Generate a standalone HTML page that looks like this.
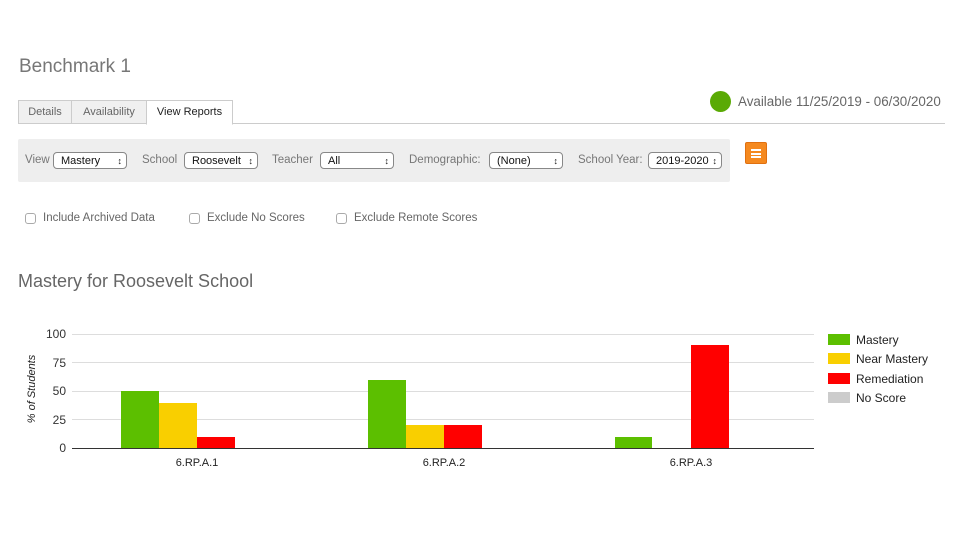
<!DOCTYPE html>
<html><head><meta charset="utf-8"><style>
*{margin:0;padding:0;box-sizing:border-box}
body{width:960px;height:540px;background:#fff;font-family:"Liberation Sans",sans-serif;position:relative;overflow:hidden;color:#555}
.a{position:absolute}
.tab{position:absolute;top:100px;height:24px;border:1px solid #ccc;background:#f0f0f0;font-size:11px;color:#666;line-height:22px;text-align:center}
.sel{position:absolute;top:152px;height:17px;border:1px solid #888;border-radius:4px;background:#fff;font-size:11px;color:#111;line-height:16px;padding-left:7px}
.sel:after{content:"\2195";position:absolute;right:4px;top:0;font-size:9px}
.lbl{position:absolute;top:154px;font-size:11.5px;color:#777}
.cb{position:absolute;top:213px;width:11px;height:11px;border:1px solid #aaa;border-radius:3px}
.cbl{position:absolute;top:212px;font-size:11.5px;color:#666}
.g{position:absolute;left:72px;width:742px;height:1px;background:#ddd}
.yl{position:absolute;width:30px;left:36px;text-align:right;font-size:12px;color:#333}
.bar{position:absolute}
.lg{position:absolute;left:828px;width:22px;height:11px}
.lt{position:absolute;left:856px;font-size:12px;color:#222}
</style></head><body>
<div class="a" style="left:19px;top:56px;font-size:19px;color:#777">Benchmark 1</div>
<div class="a" style="left:18px;top:123px;width:927px;height:1px;background:#ccc"></div>
<div class="tab" style="left:18px;width:54px">Details</div>
<div class="tab" style="left:71px;width:76px">Availability</div>
<div class="tab" style="left:146px;width:87px;background:#fff;border-bottom-color:#fff;color:#222;height:25px">View Reports</div>
<div class="a" style="left:710px;top:91px;width:21px;height:21px;border-radius:50%;background:#5aaa05"></div>
<div class="a" style="left:738px;top:94px;font-size:13.4px;color:#666">Available 11/25/2019 - 06/30/2020</div>
<div class="a" style="left:18px;top:139px;width:712px;height:43px;background:#eee;border-radius:2px"></div>
<div class="lbl" style="left:25px">View</div>
<div class="sel" style="left:53px;width:74px">Mastery</div>
<div class="lbl" style="left:142px">School</div>
<div class="sel" style="left:184px;width:74px">Roosevelt</div>
<div class="lbl" style="left:272px">Teacher</div>
<div class="sel" style="left:320px;width:74px">All</div>
<div class="lbl" style="left:409px">Demographic:</div>
<div class="sel" style="left:489px;width:74px">(None)</div>
<div class="lbl" style="left:578px">School Year:</div>
<div class="sel" style="left:648px;width:74px">2019-2020</div>
<div class="a" style="left:745px;top:142px;width:22px;height:22px;background:#f5891f;border:1px solid #e07010;border-radius:2px"><div style="margin:6px 5px;height:9px;border-top:2px solid #fff;border-bottom:2px solid #fff;position:relative"><div style="position:absolute;top:1.5px;left:0;right:0;height:2px;background:#fff"></div></div></div>
<div class="cb" style="left:25px"></div><div class="cbl" style="left:43px">Include Archived Data</div>
<div class="cb" style="left:189px"></div><div class="cbl" style="left:207px">Exclude No Scores</div>
<div class="cb" style="left:336px"></div><div class="cbl" style="left:354px">Exclude Remote Scores</div>
<div class="a" style="left:18px;top:271px;font-size:18px;color:#666">Mastery for Roosevelt School</div>
<div class="g" style="top:334px"></div><div class="g" style="top:362px"></div><div class="g" style="top:391px"></div><div class="g" style="top:419px"></div>
<div class="g" style="top:448px;background:#333"></div>
<div class="yl" style="top:327px">100</div><div class="yl" style="top:356px">75</div><div class="yl" style="top:384px">50</div><div class="yl" style="top:413px">25</div><div class="yl" style="top:441px">0</div>
<div class="a" style="left:-10px;top:383px;width:84px;text-align:center;font-size:11px;font-style:italic;color:#222;transform:rotate(-90deg)">% of Students</div>
<div class="bar" style="left:121px;top:391px;width:38px;height:57px;background:#5cbf00"></div>
<div class="bar" style="left:159px;top:403px;width:38px;height:45px;background:#f9cf00"></div>
<div class="bar" style="left:197px;top:437px;width:38px;height:11px;background:#f00"></div>
<div class="bar" style="left:368px;top:380px;width:38px;height:68px;background:#5cbf00"></div>
<div class="bar" style="left:406px;top:425px;width:38px;height:23px;background:#f9cf00"></div>
<div class="bar" style="left:444px;top:425px;width:38px;height:23px;background:#f00"></div>
<div class="bar" style="left:615px;top:437px;width:37px;height:11px;background:#5cbf00"></div>
<div class="bar" style="left:691px;top:345px;width:38px;height:103px;background:#f00"></div>
<div class="a" style="left:157px;top:457px;width:80px;text-align:center;font-size:11px;color:#222">6.RP.A.1</div>
<div class="a" style="left:404px;top:457px;width:80px;text-align:center;font-size:11px;color:#222">6.RP.A.2</div>
<div class="a" style="left:651px;top:457px;width:80px;text-align:center;font-size:11px;color:#222">6.RP.A.3</div>
<div class="lg" style="top:334px;background:#5cbf00"></div><div class="lt" style="top:333px">Mastery</div>
<div class="lg" style="top:353px;background:#f9cf00"></div><div class="lt" style="top:352px">Near Mastery</div>
<div class="lg" style="top:373px;background:#f00"></div><div class="lt" style="top:372px">Remediation</div>
<div class="lg" style="top:392px;background:#ccc"></div><div class="lt" style="top:391px">No Score</div>
</body></html>
